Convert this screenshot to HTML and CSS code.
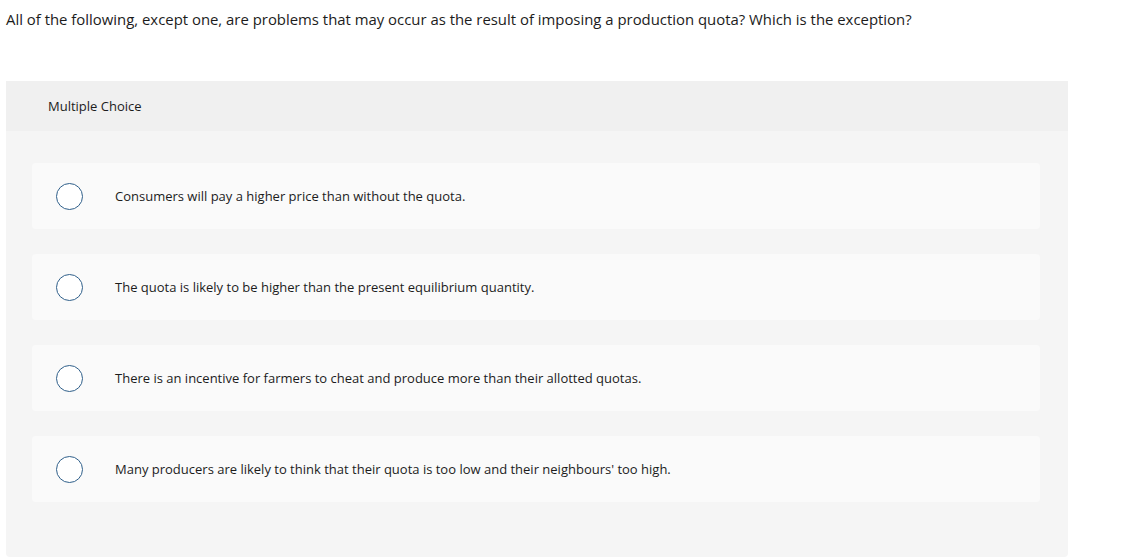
FILE: index.html
```html
<!DOCTYPE html>
<html>
<head>
<meta charset="utf-8">
<link rel="stylesheet" href="styles.css">
</head>
<body>
<div class="page">
  <p class="question">All of the following, except one, are problems that may occur as the result of imposing a production quota? Which is the exception?</p>
  <section class="panel">
    <div class="panel-head">Multiple Choice</div>
    <div class="options">
      <div class="option"><span class="radio"></span><span class="label">Consumers will pay a higher price than without the quota.</span></div>
      <div class="option"><span class="radio"></span><span class="label">The quota is likely to be higher than the present equilibrium quantity.</span></div>
      <div class="option"><span class="radio"></span><span class="label">There is an incentive for farmers to cheat and produce more than their allotted quotas.</span></div>
      <div class="option"><span class="radio"></span><span class="label">Many producers are likely to think that their quota is too low and their neighbours' too high.</span></div>
    </div>
  </section>
</div>
</body>
</html>
```
FILE: styles.css
```css
html, body { margin: 0; padding: 0; background: #fff; }
body { font-family: "Open Sans", Lato, sans-serif; color: #1c1c1c; }
.page { padding: 0 66px 0 6px; }
.question { margin: 0; padding-top: 9px; height: 81px; box-sizing: border-box; font-size: 14.9px; line-height: 20px; }
.panel { background: #f5f5f5; border-radius: 0 0 4px 4px; height: 476px; }
.panel-head { background: #f0f0f0; height: 50px; display: flex; align-items: center; padding-left: 42px; font-size: 13px; }
.options { display: flex; flex-direction: column; gap: 25px; padding: 32px 28px 0 26px; }
.option { background: #fafafa; border-radius: 4px; height: 66px; display: flex; align-items: center; font-size: 13px; }
.radio { width: 25px; height: 25px; border: 1.5px solid #2f5f8a; border-radius: 50%; background: #fff; margin-left: 24px; margin-right: 32px; flex: none; }
```
